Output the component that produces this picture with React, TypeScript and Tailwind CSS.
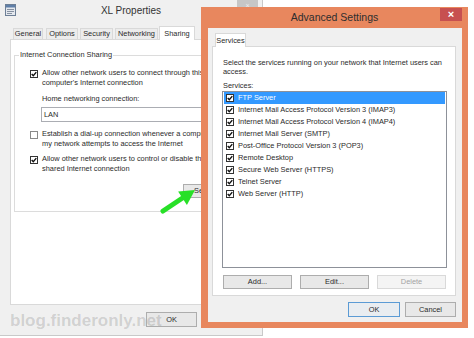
import type { ReactNode } from 'react';

const services = [
  'FTP Server',
  'Internet Mail Access Protocol Version 3 (IMAP3)',
  'Internet Mail Access Protocol Version 4 (IMAP4)',
  'Internet Mail Server (SMTP)',
  'Post-Office Protocol Version 3 (POP3)',
  'Remote Desktop',
  'Secure Web Server (HTTPS)',
  'Telnet Server',
  'Web Server (HTTP)'
];

function CheckBox({ checked, light = false }: { checked: boolean; light?: boolean }) {
  return (
    <svg width="8" height="8" viewBox="0 0 8 8" className="shrink-0">
      <rect x="0.5" y="0.5" width="7" height="7" fill="#fff" stroke={light ? '#8a8a8a' : '#333'} />
      {checked && (
        <path d="M1.7 4 L3.3 5.7 L6.3 2.1" fill="none" stroke="#111" strokeWidth="1.4" />
      )}
    </svg>
  );
}

function Button({
  children,
  className = '',
  disabled = false,
  primary = false
}: {
  children: ReactNode;
  className?: string;
  disabled?: boolean;
  primary?: boolean;
}) {
  return (
    <div
      className={`flex items-center justify-center border ${
        disabled
          ? 'border-[#d9d9d9] bg-[#f4f4f4] text-[#a3a3a3]'
          : primary
            ? 'border-[#5b9bd5] bg-[#e9edf1] text-[#2a2a2a]'
            : 'border-[#adadad] bg-[#e8e8e8] text-[#2a2a2a]'
      } ${className}`}
    >
      {children}
    </div>
  );
}

function WindowIcon() {
  return (
    <svg width="11" height="12" viewBox="0 0 11 12">
      <rect x="0.5" y="0.5" width="10" height="11" fill="#e4e8ee" stroke="#6d7f96" />
      <rect x="1" y="1" width="9" height="2.5" fill="#5f7fa8" />
      <path d="M2 5.5 H9 M2 7.5 H9 M2 9.5 H7" stroke="#7a8797" strokeWidth="0.9" />
    </svg>
  );
}

function PropertiesWindow() {
  return (
    <div className="absolute left-0 top-0 flex h-[336px] w-[263px] flex-col border-b border-r border-[#c9c9c9] bg-[#f0f0f0]">
      {/* title bar */}
      <div className="grid h-[20px] grid-cols-[1fr_auto_1fr] items-center">
        <div className="pl-[5px]">
          <WindowIcon />
        </div>
        <span className="text-[10px] text-[#333]">XL Properties</span>
        <div className="flex h-full items-start justify-end pr-[4px]">
          <div className="flex h-[9px] w-[21px] items-end justify-center bg-[#c6c6c6] text-[7px] leading-none text-[#eee]">
            ×
          </div>
        </div>
      </div>

      {/* tabs */}
      <div className="flex h-[19px] items-end pl-[13px]">
        {[
          { label: 'General', w: 'w-[30px]', ml: 'ml-0' },
          { label: 'Options', w: 'w-[32px]', ml: 'ml-[3px]' },
          { label: 'Security', w: 'w-[33px]', ml: 'ml-[2px]' },
          { label: 'Networking', w: 'w-[43px]', ml: 'ml-[2px]' }
        ].map(tab => (
          <div
            key={tab.label}
            className={`flex h-[11px] items-center justify-center border border-b-0 border-[#d9d9d9] bg-[#ececec] leading-none ${tab.w} ${tab.ml}`}
          >
            {tab.label}
          </div>
        ))}
        <div className="relative z-10 -mb-px ml-px flex h-[14px] w-[36px] items-center justify-center border border-b-0 border-[#d9d9d9] bg-white leading-none">
          Sharing
        </div>
      </div>

      {/* tab panel */}
      <div className="ml-[10px] mr-[10px] h-[266px] border border-[#d9d9d9] bg-white">
        <fieldset className="ml-[3px] mr-[3px] mt-[10px] border border-[#dcdcdc] pb-[13px] pl-[4px]">
          <legend className="px-px leading-[10px]">Internet Connection Sharing</legend>

          <div className="ml-[11px] mt-[8px] flex gap-[4px]">
            <div className="mt-[2px]">
              <CheckBox checked />
            </div>
            <div className="whitespace-nowrap leading-[10px]">
              Allow other network users to connect through this
              <br />
              computer's Internet connection
            </div>
          </div>

          <div className="ml-[23px] mt-[6px] leading-[10px]">Home networking connection:</div>
          <div className="ml-[22px] mt-[3px] flex h-[15px] w-[200px] items-center border border-[#abadb3] bg-white pl-[2px]">
            LAN
          </div>

          <div className="ml-[11px] mt-[7px] flex gap-[4px]">
            <div className="mt-[2px]">
              <CheckBox checked={false} light />
            </div>
            <div className="whitespace-nowrap leading-[10px]">
              Establish a dial-up connection whenever a computer on
              <br />
              my network attempts to access the Internet
            </div>
          </div>

          <div className="ml-[11px] mt-[5px] flex gap-[4px]">
            <div className="mt-[2px]">
              <CheckBox checked />
            </div>
            <div className="whitespace-nowrap leading-[10px]">
              Allow other network users to control or disable the
              <br />
              shared Internet connection
            </div>
          </div>

          <Button className="ml-[164px] mt-[10px] h-[14px] w-[55px]">Settings...</Button>
        </fieldset>
      </div>

      <Button className="ml-[146px] mt-[7px] h-[15px] w-[51px]">OK</Button>
    </div>
  );
}

function AdvancedSettings() {
  return (
    <div className="absolute left-[201px] top-[7px] flex h-[321px] w-[267px] flex-col bg-[#e8875e]">
      <div className="relative flex h-[21px] items-center justify-center text-[10.5px] text-[#2e2e2e]">
        Advanced Settings
        <div className="absolute right-[6px] top-px flex h-[13px] w-[22px] items-center justify-center bg-[#c75050] text-[11px] font-bold leading-none text-white">
          ×
        </div>
      </div>

      <div className="mb-[6px] ml-[7px] mr-[6px] flex-1 bg-[#f0f0f0]">
        <div className="flex pl-[7px] pt-[5px]">
          <div className="relative z-10 -mb-px flex h-[14px] w-[31px] items-center justify-center border border-b-0 border-[#d9d9d9] bg-white leading-none">
            Services
          </div>
        </div>

        <div className="ml-[4px] mr-[6px] h-[250px] border border-[#d9d9d9] bg-white pl-[9px]">
          <div className="ml-px mt-[11px] leading-[9px]">
            Select the services running on your network that Internet users can
            <br />
            access.
          </div>
          <div className="ml-px mt-[5px] leading-[9px]">Services:</div>

          <div className="mt-px h-[177px] w-[225px] border border-[#8d9199] bg-white">
            {services.map((name, i) => (
              <div
                key={name}
                className={`mx-px flex h-[12px] items-center gap-[4px] whitespace-nowrap pl-[2px] ${
                  i === 0 ? 'bg-[#3399ff] text-white' : ''
                }`}
              >
                <CheckBox checked />
                {name}
              </div>
            ))}
          </div>

          <div className="ml-px mt-[7px] flex gap-[8px]">
            <Button className="h-[14px] w-[69px]">Add...</Button>
            <Button className="h-[14px] w-[69px]">Edit...</Button>
            <Button className="h-[14px] w-[69px]" disabled>
              Delete
            </Button>
          </div>
        </div>

        <div className="mt-[6px] flex justify-end gap-[5px] pr-[6px]">
          <Button className="h-[15px] w-[52px]" primary>
            OK
          </Button>
          <Button className="h-[15px] w-[51px]">Cancel</Button>
        </div>
      </div>
    </div>
  );
}

export default function App() {
  return (
    <div className="relative h-[338px] w-[474px] overflow-hidden bg-white font-['Liberation_Sans',Arial,sans-serif] text-[7.4px] text-[#2a2a2a]">
      <PropertiesWindow />

      {/* green pointer arrow */}
      <svg className="absolute left-[158px] top-[180px]" width="42" height="36" viewBox="0 0 42 36">
        <path d="M5 31 L26 17" stroke="#27e027" strokeWidth="5" strokeLinecap="round" />
        <polygon points="37,10 28.9,24.9 20.1,11.5" fill="#27e027" />
      </svg>

      {/* watermark */}
      <div className="absolute left-[10px] top-[311px] text-[17px] font-bold leading-[20px] text-black/15">
        blog.finderonly.net
      </div>

      <AdvancedSettings />
    </div>
  );
}
